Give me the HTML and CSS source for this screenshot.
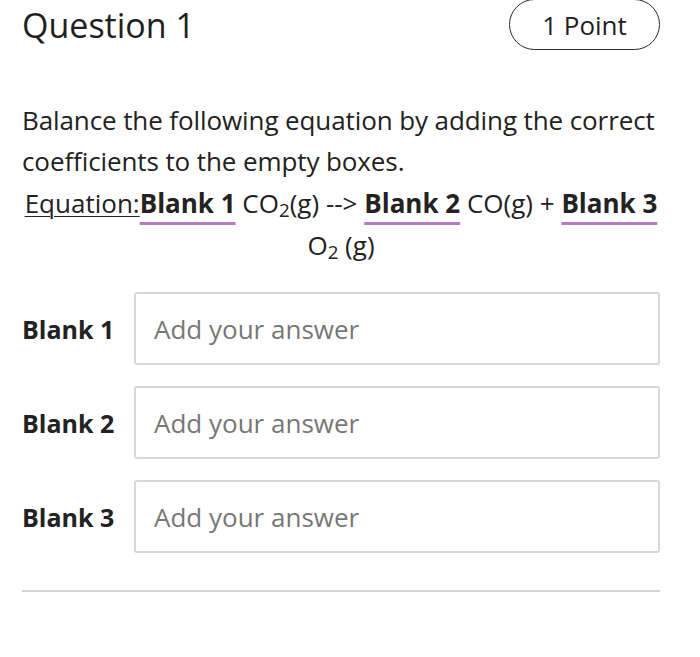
FILE: index.html
```html
<!DOCTYPE html>
<html>
<head>
<meta charset="utf-8">
<link rel="stylesheet" href="styles.css">
</head>
<body>
<div class="page">
  <div class="header">
    <h1 class="title">Question 1</h1>
    <div class="points">1 Point</div>
  </div>
  <p class="prompt">Balance the following equation by adding the correct coefficients to the empty boxes.</p>
  <p class="equation"><span class="eq-label">Equation:</span><span class="blank">Blank 1</span> CO<sub class="sub">2</sub>(g) --&gt; <span class="blank">Blank 2</span> CO(g) + <span class="blank">Blank 3</span> O<sub class="sub">2</sub> (g)</p>
  <div class="answers">
    <div class="row"><div class="label">Blank 1</div><div class="input">Add your answer</div></div>
    <div class="row"><div class="label">Blank 2</div><div class="input">Add your answer</div></div>
    <div class="row"><div class="label">Blank 3</div><div class="input">Add your answer</div></div>
  </div>
  <div class="divider"></div>
</div>
</body>
</html>
```
FILE: styles.css
```css
html, body {
  margin: 0;
  padding: 0;
  background: #fff;
}
.page {
  padding: 0 40px 0 22px;
  font-family: "Open Sans", "Noto Sans", sans-serif;
  color: #222;
}
.header {
  display: flex;
  justify-content: space-between;
  align-items: flex-start;
  height: 51px;
}
.title {
  margin: 0;
  padding-top: 3px;
  font-size: 34px;
  font-weight: 500;
  line-height: 44px;
  color: #1e1e1e;
}
.points {
  box-sizing: border-box;
  width: 151px;
  height: 51px;
  margin-top: -1px;
  border: 1.5px solid #2a2a2a;
  border-radius: 26px;
  display: flex;
  align-items: center;
  justify-content: center;
  font-size: 26px;
  color: #1e1e1e;
}
.prompt {
  margin: 49px 0 0;
  font-size: 26px;
  letter-spacing: -0.1px;
  line-height: 41px;
}
.equation {
  margin: 0;
  font-size: 26px;
  line-height: 42px;
  text-align: center;
}
.eq-label {
  text-decoration: underline;
  text-decoration-thickness: 1px;
  text-underline-offset: 3px;
}
.blank {
  font-weight: 700;
  text-decoration: underline;
  text-decoration-color: #b57bc9;
  text-decoration-thickness: 3px;
  text-underline-offset: 9px;
}
.sub {
  font-size: 0.72em;
  line-height: 0;
  vertical-align: -0.22em;
}
.answers {
  margin-top: 26px;
  display: flex;
  flex-direction: column;
  gap: 21px;
}
.row {
  display: flex;
  align-items: center;
  gap: 18px;
}
.label {
  width: 94px;
  font-size: 25px;
  font-weight: 700;
  color: #222;
}
.input {
  flex: 1;
  box-sizing: border-box;
  height: 73px;
  border: 2px solid #d8d8d8;
  border-radius: 3px;
  padding: 0 18px;
  display: flex;
  align-items: center;
  font-size: 26px;
  color: #777;
}
.divider {
  margin-top: 37px;
  height: 2px;
  background: #d4d4d4;
}
```
